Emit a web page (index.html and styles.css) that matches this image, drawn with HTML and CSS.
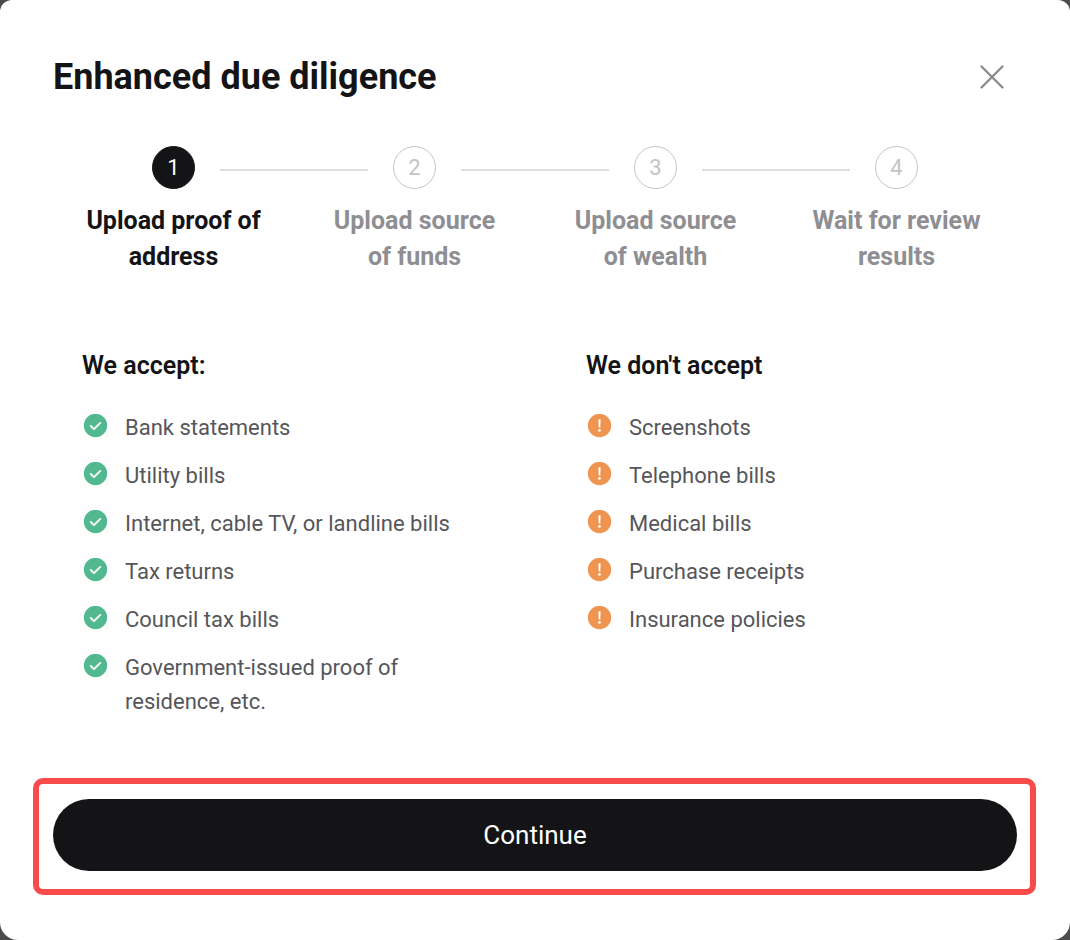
FILE: index.html
```html
<!DOCTYPE html>
<html lang="en">
<head>
<meta charset="utf-8">
<title>Enhanced due diligence</title>
<link rel="stylesheet" href="styles.css">
</head>
<body>
<svg class="defs" aria-hidden="true">
  <symbol id="ok" viewBox="0 0 24 24"><circle cx="11.500" cy="11.500" r="11.700" fill="#52b88f"/><path d="M6.800 12l3.200 3.200 6.300-6.300" fill="none" stroke="#fff" stroke-width="1.900" stroke-linecap="round" stroke-linejoin="round"/></symbol>
  <symbol id="warn" viewBox="0 0 24 24"><circle cx="11.500" cy="11.500" r="11.700" fill="#f09550"/><path d="M10.400 5.300h2.200l-.3 8.200h-1.600z" fill="#fff"/><circle cx="11.500" cy="16.400" r="1.300" fill="#fff"/></symbol>
</svg>
<main class="dialog" role="dialog" aria-labelledby="title">
  <header class="head">
    <h1 id="title">Enhanced due diligence</h1>
    <button class="close" type="button" aria-label="Close"><svg viewBox="0 0 24 24"><path d="M1.500 1.500l21 21M22.500 1.500l-21 21" fill="none" stroke="#88888c" stroke-width="2.200" stroke-linecap="round"/></svg></button>
  </header>
  <ol class="steps">
    <li class="step active"><span class="num">1</span><span class="label">Upload proof of address</span></li>
    <li class="step"><span class="num">2</span><span class="label">Upload source of funds</span></li>
    <li class="step"><span class="num">3</span><span class="label">Upload source of wealth</span></li>
    <li class="step"><span class="num">4</span><span class="label">Wait for review results</span></li>
  </ol>
  <div class="lists">
    <section>
      <h2>We accept:</h2>
      <ul>
        <li><svg><use href="#ok"/></svg><span>Bank statements</span></li>
        <li><svg><use href="#ok"/></svg><span>Utility bills</span></li>
        <li><svg><use href="#ok"/></svg><span>Internet, cable TV, or landline bills</span></li>
        <li><svg><use href="#ok"/></svg><span>Tax returns</span></li>
        <li><svg><use href="#ok"/></svg><span>Council tax bills</span></li>
        <li><svg><use href="#ok"/></svg><span>Government-issued proof of residence, etc.</span></li>
      </ul>
    </section>
    <section>
      <h2>We don't accept</h2>
      <ul>
        <li><svg><use href="#warn"/></svg><span>Screenshots</span></li>
        <li><svg><use href="#warn"/></svg><span>Telephone bills</span></li>
        <li><svg><use href="#warn"/></svg><span>Medical bills</span></li>
        <li><svg><use href="#warn"/></svg><span>Purchase receipts</span></li>
        <li><svg><use href="#warn"/></svg><span>Insurance policies</span></li>
      </ul>
    </section>
  </div>
  <div class="highlight"><button class="continue" type="button">Continue</button></div>
</main>
</body>
</html>
```
FILE: styles.css
```css
* { box-sizing: border-box; }
body { margin: 0; background: #4c4c4c; font-family: Roboto, sans-serif; color: #141416; }
.defs { display: none; }
.dialog { background: #fff; border-radius: 12px 12px 18px 18px; min-height: 100vh; padding: 52px 34px 45px 33px; }
.head { display: flex; justify-content: space-between; align-items: center; padding: 0 32px 0 20px; }
h1 { margin: 0; font-size: 36px; line-height: 50px; font-weight: 700; }
.close { display: flex; border: 0; padding: 0; background: none; }
.close svg { width: 24px; height: 24px; }
.steps { display: grid; grid-template-columns: repeat(4, 1fr); list-style: none; margin: 44px 19px 0 20px; padding: 0; }
.step { position: relative; display: flex; flex-direction: column; align-items: center; gap: 14px; color: #8e8e93; }
.step + .step::before { content: ""; position: absolute; top: 23px; right: calc(50% + 47px); left: calc(-50% + 46px); height: 2px; background: #dedede; }
.num { width: 43px; height: 43px; border: 1px solid #c4c4c6; border-radius: 50%; display: grid; place-items: center; font-size: 22px; color: #c4c4c6; }
.label { max-width: 190px; text-align: center; font-size: 25px; line-height: 36px; font-weight: 700; }
.active { color: #141416; }
.active .num { background: #141416; border-color: #141416; color: #fff; }
.lists { display: grid; grid-template-columns: 1fr 1fr; gap: 103px; padding: 0 49px; margin-top: 73px; }
h2 { margin: 0; font-size: 25px; line-height: 36px; font-weight: 600; }
ul { list-style: none; margin: 27px 0 0; padding: 0 20px 0 2px; display: grid; gap: 14px; }
li { font-size: 22px; line-height: 34px; }
ul li { display: flex; gap: 17px; color: #56565a; }
ul svg { width: 24px; height: 24px; flex: none; margin-top: 3px; overflow: visible; }
.highlight { margin-top: 59px; border: 6px solid #fa4b4b; border-radius: 10px; padding: 15px 13px 18px 14px; }
.continue { display: block; width: 100%; height: 72px; border: 0; border-radius: 36px; background: #141416; color: #fff; font: 400 26px/36px Roboto, sans-serif; }
```
